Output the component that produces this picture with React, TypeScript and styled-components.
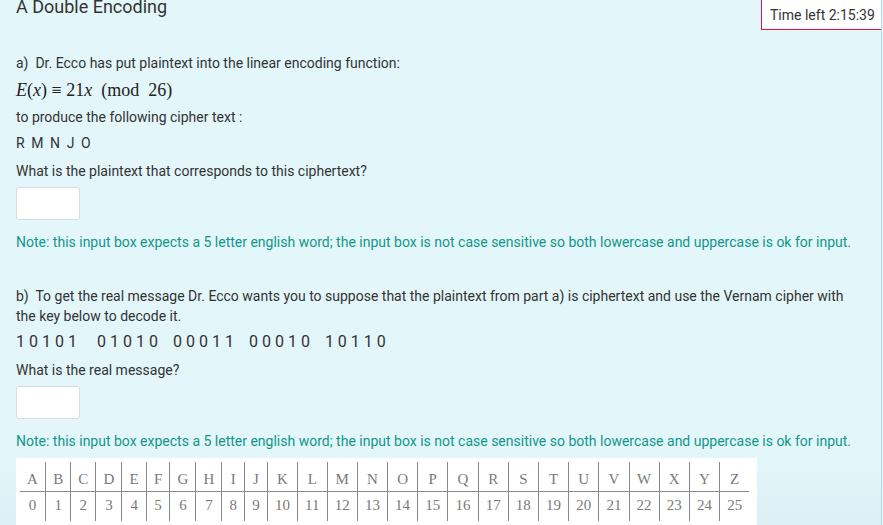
import React from 'react';
import styled, { createGlobalStyle } from 'styled-components';

const GlobalStyle = createGlobalStyle`
  html, body {
    margin: 0;
    padding: 0;
    background: #e3f6fa;
  }
  body {
    font-family: Roboto, "Liberation Sans", Arial, sans-serif;
    color: #333;
  }
`;

const letters = 'ABCDEFGHIJKLMNOPQRSTUVWXYZ'.split('');
const keyGroups = ['10101', '01010', '00011', '00010', '10110'];

const Page = styled.div`
  width: 882px;
  height: 525px;
  overflow: hidden;
  border-right: 1px solid #a8dfe8;
  background: linear-gradient(to bottom, #e3f6fa 0%, #e3f6fa 88%, #dbeff4 100%);
  padding-left: 16px;
  box-sizing: border-box;
`;

const Header = styled.div`
  display: flex;
  justify-content: space-between;
  align-items: flex-start;
  height: 30px;
`;

const Title = styled.h1`
  margin: -3px 0 0;
  font-size: 18px;
  line-height: 20px;
  font-weight: 400;
  color: #333;
`;

const Timer = styled.div`
  box-sizing: border-box;
  height: 30px;
  width: 121px;
  margin-right: -1px;
  padding: 6px 0 0 8px;
  border: 1px solid #e4103f;
  border-top: none;
  background: #fff;
  font-size: 14px;
  line-height: 18px;
  color: #333;
`;

const Body = styled.div`
  padding-right: 34px;
`;

const Line = styled.p<{ top: number }>`
  margin: ${({ top }) => top}px 0 0;
  font-size: 14px;
  line-height: 20px;
  color: #333;
`;

const Math = styled.div`
  margin-top: 7px;
  font-family: "Liberation Serif", "Times New Roman", serif;
  font-size: 18px;
  line-height: 20px;
  color: #222;
  i {
    font-style: italic;
  }
`;

const Cipher = styled.p`
  margin: 6px 0 0;
  font-size: 14px;
  letter-spacing: 6.6px;
  line-height: 20px;
`;

const Binary = styled.div`
  display: flex;
  gap: 11px;
  margin-top: 6px;
  font-size: 16px;
  letter-spacing: 4px;
  line-height: 20px;
`;

const Group = styled.span<{ wide?: boolean }>`
  margin-right: ${({ wide }) => (wide ? 5 : 0)}px;
`;

const AnswerRow = styled.div<{ top: number }>`
  margin-top: ${({ top }) => top}px;
`;

const Answer = styled.input`
  display: block;
  box-sizing: border-box;
  width: 64px;
  height: 33px;
  border: 1px solid #d8dcdc;
  border-radius: 3px;
  background: #fff;
  outline: none;
`;

const Note = styled.p<{ top: number }>`
  margin: ${({ top }) => top}px 0 0;
  font-size: 14px;
  line-height: 20px;
  white-space: nowrap;
  color: #12968a;
`;

const TableCard = styled.div`
  margin-top: 7px;
  width: fit-content;
  background: #fff;
  padding: 4px 8px 8px 4px;
`;

const Grid = styled.table`
  border-collapse: collapse;
  font-family: "Liberation Serif", "Times New Roman", serif;
  font-size: 15px;
  color: #7a7a7a;
`;

const Cell = styled.td<{ head?: boolean }>`
  padding: ${({ head }) => (head ? '8px 7.1px 2px' : '4px 7.1px 6px')};
  text-align: center;
  line-height: 19px;
  border-left: 1px solid #8a8a8a;
  border-bottom: ${({ head }) => (head ? '1px solid #8a8a8a' : 'none')};
  &:first-child {
    border-left: none;
  }
`;

const note =
  'Note: this input box expects a 5 letter english word; the input box is not case sensitive so both lowercase and uppercase is ok for input.';

export default function App() {
  return (
    <>
      <GlobalStyle />
      <Page>
        <Header>
          <Title>A Double Encoding</Title>
          <Timer>Time left 2:15:39</Timer>
        </Header>
        <Body>
          <Line top={23}>a)&nbsp; Dr. Ecco has put plaintext into the linear encoding function:</Line>
          <Math>
            <i>E</i>(<i>x</i>) ≡ 21<i>x</i>&nbsp;&nbsp;(mod&nbsp;&nbsp;26)
          </Math>
          <Line top={7}>to produce the following cipher text :</Line>
          <Cipher>RMNJO</Cipher>
          <Line top={8}>What is the plaintext that corresponds to this ciphertext?</Line>
          <AnswerRow top={6}>
            <Answer />
          </AnswerRow>
          <Note top={12}>{note}</Note>
          <Line top={34}>
            b)&nbsp; To get the real message Dr. Ecco wants you to suppose that the plaintext from part a) is ciphertext and use the Vernam cipher with the key below to decode it.
          </Line>
          <Binary>
            {keyGroups.map((g, i) => (
              <Group key={g} wide={i === 0}>{g}</Group>
            ))}
          </Binary>
          <Line top={8}>What is the real message?</Line>
          <AnswerRow top={6}>
            <Answer />
          </AnswerRow>
          <Note top={12}>{note}</Note>
        </Body>
        <TableCard>
          <Grid>
            <tbody>
              <tr>
                {letters.map((l) => (
                  <Cell head key={l}>{l}</Cell>
                ))}
              </tr>
              <tr>
                {letters.map((l, i) => (
                  <Cell key={l}>{i}</Cell>
                ))}
              </tr>
            </tbody>
          </Grid>
        </TableCard>
      </Page>
    </>
  );
}
